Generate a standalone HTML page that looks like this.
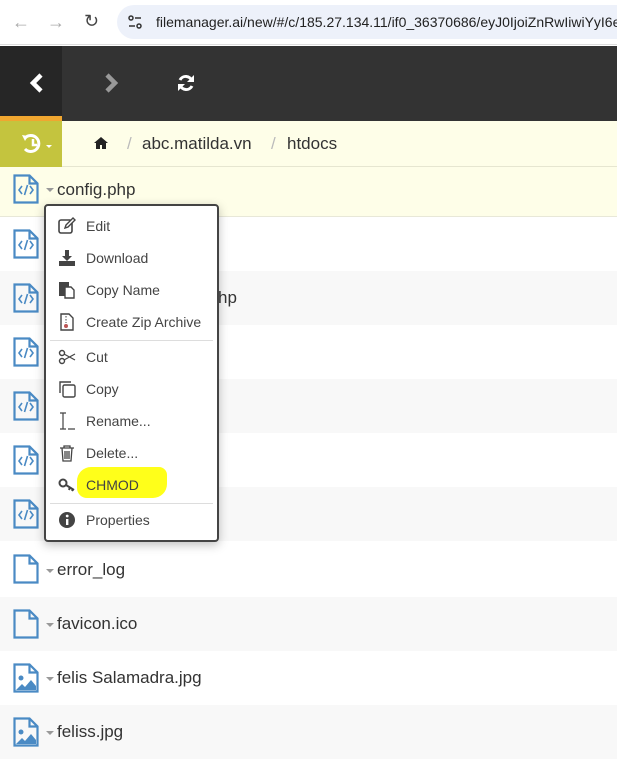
<!DOCTYPE html><html><head><style>
*{margin:0;padding:0;box-sizing:border-box}
body{width:617px;height:741px;overflow:hidden;font-family:"Liberation Sans",sans-serif;background:#fff;position:relative}
.abs{position:absolute}
.row{position:absolute;left:0;width:617px;height:54px}
.row .ic{position:absolute;left:13px;top:12px}
.row .car{position:absolute;left:46px;width:0;height:0;border-left:4px solid transparent;border-right:4px solid transparent;border-top:4px solid #999}
.row .nm{position:absolute;left:57px;font-size:17px;color:#333}
.menu{position:absolute;left:44px;top:204px;width:175px;height:338px;background:#fff;border:2px solid #444;border-radius:4px;box-shadow:0 3px 10px rgba(0,0,0,.25)}
.mi{position:absolute;left:40px;font-size:14px;color:#444}
.mic{position:absolute;left:12px;width:18px;height:18px}
.sep{position:absolute;left:4px;right:4px;height:1px;background:#ddd}
</style></head><body>
<div class="abs" style="left:0;top:0;width:617px;height:45px;background:#fff;border-bottom:1px solid #ddd"></div>
<div class="abs" style="left:12px;top:12px;font-size:18px;color:#aaa">&#8592;</div>
<div class="abs" style="left:47px;top:12px;font-size:18px;color:#aaa">&#8594;</div>
<div class="abs" style="left:84px;top:11px;font-size:18px;color:#444">&#8635;</div>
<div class="abs" style="left:117px;top:5px;width:520px;height:34px;background:#edf1fa;border-radius:17px"></div>
<svg class="abs" style="left:127px;top:14px" width="16" height="16" viewBox="0 0 16 16"><circle cx="4" cy="4" r="2" fill="none" stroke="#333" stroke-width="1.5"/><line x1="8" y1="4" x2="14" y2="4" stroke="#333" stroke-width="1.5"/><circle cx="12" cy="12" r="2" fill="none" stroke="#333" stroke-width="1.5"/><line x1="2" y1="12" x2="8" y2="12" stroke="#333" stroke-width="1.5"/></svg>
<div class="abs" style="left:156px;top:14px;font-size:14px;color:#222;white-space:nowrap">filemanager.ai/new/#/c/185.27.134.11/if0_36370686/eyJ0IjoiZnRwIiwiYyI6ey</div>
<div class="abs" style="left:0;top:46px;width:617px;height:75px;background:#333"></div>
<div class="abs" style="left:0;top:46px;width:62px;height:70px;background:#262626"></div>
<div class="abs" style="left:0;top:116px;width:62px;height:5px;background:#f0a630"></div>
<svg class="abs" style="left:28px;top:72px" width="18" height="22" viewBox="0 0 18 22"><path d="M13 3L5 11l8 8" fill="none" stroke="#fff" stroke-width="4.5"/></svg>
<svg class="abs" style="left:102px;top:72px" width="18" height="22" viewBox="0 0 18 22"><path d="M5 3l8 8-8 8" fill="none" stroke="#999" stroke-width="4.5"/></svg>
<svg class="abs" style="left:176px;top:73px" width="20" height="20" viewBox="0 0 20 20"><path d="M16 8A6.5 6.5 0 0 0 4 7" fill="none" stroke="#fff" stroke-width="3"/><path d="M18 2v7h-7z" fill="#fff"/><path d="M4 12a6.5 6.5 0 0 0 12 1" fill="none" stroke="#fff" stroke-width="3"/><path d="M2 18v-7h7z" fill="#fff"/></svg>
<div class="abs" style="left:0;top:121px;width:617px;height:46px;background:#fefee8;border-bottom:1px solid #e6e6d0"></div>
<div class="abs" style="left:0;top:121px;width:62px;height:46px;background:#c4c43e"></div>
<svg class="abs" style="left:21px;top:132px" width="36" height="24" viewBox="0 0 36 24"><path d="M4 6A8 8 0 1 1 4 17" fill="none" stroke="#fff" stroke-width="3"/><path d="M1 3l6 1-3 5z" fill="#fff"/><path d="M12 7v6h4" fill="none" stroke="#fff" stroke-width="2.5"/><path d="M25 13h6l-3 3z" fill="#fff"/></svg>
<svg class="abs" style="left:93px;top:136px" width="16" height="14" viewBox="0 0 16 14"><path d="M8 1L1 7h2v6h4V9h2v4h4V7h2z" fill="#222"/></svg>
<div class="abs" style="left:127px;top:134px;font-size:17px;color:#bbb">/</div>
<div class="abs" style="left:142px;top:134px;font-size:17px;color:#333">abc.matilda.vn</div>
<div class="abs" style="left:271px;top:134px;font-size:17px;color:#bbb">/</div>
<div class="abs" style="left:287px;top:134px;font-size:17px;color:#333">htdocs</div>
<div class="row" style="top:167px;height:50px;background:#fefee8;border-bottom:1px solid #e8e8d8"><svg class="ic" style="top:7px" width="26" height="30" viewBox="0 0 26 30"><path d="M1.5 1.5h15l8 8v19h-23z M16.5 1.5v8h8" fill="none" stroke="#4a8ac4" stroke-width="2.2"/><path d="M9 12l-3 4 3 4M17 12l3 4-3 4M14.5 11l-3 10" fill="none" stroke="#4a8ac4" stroke-width="1.6"/></svg><div class="car" style="top:21px"></div><div class="nm" style="top:13px">config.php</div></div>
<div class="row" style="top:217px;background:#fff"><svg class="ic" width="26" height="30" viewBox="0 0 26 30"><path d="M1.5 1.5h15l8 8v19h-23z M16.5 1.5v8h8" fill="none" stroke="#4a8ac4" stroke-width="2.2"/><path d="M9 12l-3 4 3 4M17 12l3 4-3 4M14.5 11l-3 10" fill="none" stroke="#4a8ac4" stroke-width="1.6"/></svg></div>
<div class="row" style="top:271px;background:#f8f8f8"><svg class="ic" width="26" height="30" viewBox="0 0 26 30"><path d="M1.5 1.5h15l8 8v19h-23z M16.5 1.5v8h8" fill="none" stroke="#4a8ac4" stroke-width="2.2"/><path d="M9 12l-3 4 3 4M17 12l3 4-3 4M14.5 11l-3 10" fill="none" stroke="#4a8ac4" stroke-width="1.6"/></svg><div class="nm" style="left:218px;top:17px">hp</div></div>
<div class="row" style="top:325px;background:#fff"><svg class="ic" width="26" height="30" viewBox="0 0 26 30"><path d="M1.5 1.5h15l8 8v19h-23z M16.5 1.5v8h8" fill="none" stroke="#4a8ac4" stroke-width="2.2"/><path d="M9 12l-3 4 3 4M17 12l3 4-3 4M14.5 11l-3 10" fill="none" stroke="#4a8ac4" stroke-width="1.6"/></svg></div>
<div class="row" style="top:379px;background:#f8f8f8"><svg class="ic" width="26" height="30" viewBox="0 0 26 30"><path d="M1.5 1.5h15l8 8v19h-23z M16.5 1.5v8h8" fill="none" stroke="#4a8ac4" stroke-width="2.2"/><path d="M9 12l-3 4 3 4M17 12l3 4-3 4M14.5 11l-3 10" fill="none" stroke="#4a8ac4" stroke-width="1.6"/></svg></div>
<div class="row" style="top:433px;background:#fff"><svg class="ic" width="26" height="30" viewBox="0 0 26 30"><path d="M1.5 1.5h15l8 8v19h-23z M16.5 1.5v8h8" fill="none" stroke="#4a8ac4" stroke-width="2.2"/><path d="M9 12l-3 4 3 4M17 12l3 4-3 4M14.5 11l-3 10" fill="none" stroke="#4a8ac4" stroke-width="1.6"/></svg></div>
<div class="row" style="top:487px;background:#f8f8f8"><svg class="ic" width="26" height="30" viewBox="0 0 26 30"><path d="M1.5 1.5h15l8 8v19h-23z M16.5 1.5v8h8" fill="none" stroke="#4a8ac4" stroke-width="2.2"/><path d="M9 12l-3 4 3 4M17 12l3 4-3 4M14.5 11l-3 10" fill="none" stroke="#4a8ac4" stroke-width="1.6"/></svg></div>
<div class="row" style="top:541px;height:56px;background:#fff"><svg class="ic" style="top:13px" width="26" height="30" viewBox="0 0 26 30"><path d="M1.5 1.5h15l8 8v19h-23z M16.5 1.5v8h8" fill="none" stroke="#4a8ac4" stroke-width="2.2"/></svg><div class="car" style="top:28px"></div><div class="nm" style="top:19px">error_log</div></div>
<div class="row" style="top:597px;background:#f8f8f8"><svg class="ic" width="26" height="30" viewBox="0 0 26 30"><path d="M1.5 1.5h15l8 8v19h-23z M16.5 1.5v8h8" fill="none" stroke="#4a8ac4" stroke-width="2.2"/></svg><div class="car" style="top:26px"></div><div class="nm" style="top:17px">favicon.ico</div></div>
<div class="row" style="top:651px;background:#fff"><svg class="ic" width="26" height="30" viewBox="0 0 26 30"><path d="M1.5 1.5h15l8 8v19h-23z M16.5 1.5v8h8" fill="none" stroke="#4a8ac4" stroke-width="2.2"/><circle cx="8" cy="15" r="2.5" fill="#4a8ac4"/><path d="M3 27l6-6 3 3 6-7 5 6v4z" fill="#4a8ac4"/></svg><div class="car" style="top:26px"></div><div class="nm" style="top:17px">felis Salamadra.jpg</div></div>
<div class="row" style="top:705px;background:#f8f8f8"><svg class="ic" width="26" height="30" viewBox="0 0 26 30"><path d="M1.5 1.5h15l8 8v19h-23z M16.5 1.5v8h8" fill="none" stroke="#4a8ac4" stroke-width="2.2"/><circle cx="8" cy="15" r="2.5" fill="#4a8ac4"/><path d="M3 27l6-6 3 3 6-7 5 6v4z" fill="#4a8ac4"/></svg><div class="car" style="top:26px"></div><div class="nm" style="top:17px">feliss.jpg</div></div>
<div class="menu">
<svg class="mic" style="top:11px" viewBox="0 0 18 18"><rect x="1" y="3" width="13" height="13" rx="2" fill="none" stroke="#444" stroke-width="1.6"/><path d="M7 11l1-3 7-7 2 2-7 7z" fill="#fff" stroke="#444" stroke-width="1.4"/></svg><div class="mi" style="top:12px">Edit</div>
<svg class="mic" style="top:43px" viewBox="0 0 18 18"><path d="M7 1h4v6h3l-5 5-5-5h3z" fill="#444"/><rect x="1" y="12" width="16" height="5" fill="#444"/></svg><div class="mi" style="top:44px">Download</div>
<svg class="mic" style="top:75px" viewBox="0 0 18 18"><rect x="1" y="1" width="10" height="14" fill="#444"/><path d="M7 6h6l3 3v8H7z" fill="#fff" stroke="#444" stroke-width="1.4"/></svg><div class="mi" style="top:76px">Copy Name</div>
<svg class="mic" style="top:107px" viewBox="0 0 18 18"><path d="M3 1h8l4 4v12H3z" fill="none" stroke="#444" stroke-width="1.4"/><path d="M8 3v7" stroke="#444" stroke-dasharray="1.5 1.5"/><circle cx="8" cy="13" r="2" fill="#b55"/></svg><div class="mi" style="top:108px">Create Zip Archive</div>
<div class="sep" style="top:134px"></div>
<svg class="mic" style="top:142px" viewBox="0 0 18 18"><circle cx="4" cy="5" r="2.5" fill="none" stroke="#444" stroke-width="1.4"/><circle cx="4" cy="13" r="2.5" fill="none" stroke="#444" stroke-width="1.4"/><path d="M6 6l11 6M6 12l11-6" stroke="#444" stroke-width="1.2"/></svg><div class="mi" style="top:143px">Cut</div>
<svg class="mic" style="top:174px" viewBox="0 0 18 18"><path d="M2 13V2h11" fill="none" stroke="#444" stroke-width="1.4"/><rect x="5" y="5" width="12" height="12" rx="1.5" fill="none" stroke="#444" stroke-width="1.4"/></svg><div class="mi" style="top:175px">Copy</div>
<svg class="mic" style="top:206px" viewBox="0 0 18 18"><path d="M2 1h6M5 1v16M2 17h6M10 17h7" stroke="#444" stroke-width="1.2" fill="none"/></svg><div class="mi" style="top:207px">Rename...</div>
<svg class="mic" style="top:238px" viewBox="0 0 18 18"><path d="M2 4h14M6 4V2h6v2M4 4l1 13h8l1-13M7 7v8M9 7v8M11 7v8" fill="none" stroke="#444" stroke-width="1.3"/></svg><div class="mi" style="top:239px">Delete...</div>
<div class="abs" style="left:31px;top:261px;width:90px;height:31px;background:#ffff1a;border-radius:14px 8px 14px 10px"></div>
<svg class="mic" style="top:270px" viewBox="0 0 18 18"><circle cx="5" cy="7" r="3.5" fill="none" stroke="#444" stroke-width="2"/><path d="M8 9l8 5M12 11l-1 3M15 13l-1 2" stroke="#444" stroke-width="2"/></svg><div class="mi" style="top:271px">CHMOD</div>
<div class="sep" style="top:297px"></div>
<svg class="mic" style="top:305px" viewBox="0 0 18 18"><circle cx="9" cy="9" r="8" fill="#444"/><rect x="8" y="8" width="2.4" height="6" fill="#fff"/><circle cx="9.2" cy="5" r="1.4" fill="#fff"/></svg><div class="mi" style="top:306px">Properties</div>
</div>
</body></html>
